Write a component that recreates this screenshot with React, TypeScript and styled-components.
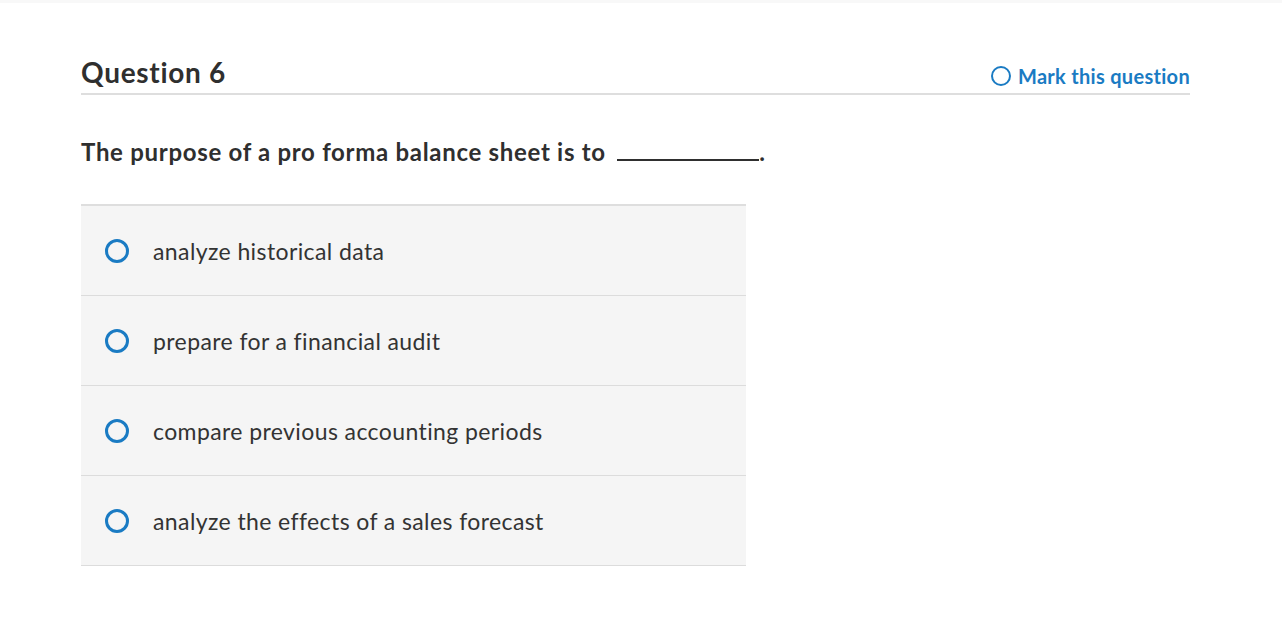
import { createGlobalStyle, styled } from "styled-components";

const GlobalStyle = createGlobalStyle`
  html, body {
    margin: 0;
    padding: 0;
    background: #fff;
    font-family: Lato, "Open Sans", Arial, sans-serif;
    color: #2f2f2f;
  }
`;

const options = [
  "analyze historical data",
  "prepare for a financial audit",
  "compare previous accounting periods",
  "analyze the effects of a sales forecast",
];

const App = () => {
  return (
    <>
      <GlobalStyle />
      <TopStrip />
      <Page>
        <Header>
          <Title>Question 6</Title>
          <MarkButton type="button">
            <MarkCircle />
            Mark this question
          </MarkButton>
        </Header>
        <Prompt>
          The purpose of a pro forma balance sheet is to <Blank />.
        </Prompt>
        <OptionList>
          {options.map((label) => (
            <Option key={label}>
              <Radio />
              <OptionText>{label}</OptionText>
            </Option>
          ))}
        </OptionList>
      </Page>
    </>
  );
};

export default App;

const TopStrip = styled.div`
  height: 3px;
  background: #f8f8f8;
`;

const Page = styled.main`
  width: 1109px;
  padding: 53px 0 0 81px;
`;

const Header = styled.header`
  display: flex;
  justify-content: space-between;
  align-items: flex-end;
  padding-bottom: 5px;
  border-bottom: 2px solid #dedede;
`;

const Title = styled.h1`
  margin: 0;
  font-size: 28px;
  line-height: 32px;
  font-weight: 700;
  letter-spacing: 0.7px;
  color: #2f2f2f;
`;

const MarkButton = styled.button`
  display: flex;
  align-items: center;
  gap: 7px;
  border: 0;
  background: none;
  padding: 0 0 2px;
  font-family: inherit;
  font-size: 20px;
  line-height: 20px;
  font-weight: 700;
  letter-spacing: 0.3px;
  color: #1a7bc3;
  cursor: pointer;
`;

const MarkCircle = styled.span`
  width: 16px;
  height: 16px;
  border: 2px solid #1a7bc3;
  border-radius: 50%;
`;

const Prompt = styled.p`
  margin: 43px 0 0;
  font-size: 24px;
  line-height: 28px;
  font-weight: 700;
  letter-spacing: 0.7px;
  color: #2f2f2f;
`;

const Blank = styled.span`
  display: inline-block;
  width: 142px;
  margin-left: 5px;
  border-bottom: 2px solid #2f2f2f;
  vertical-align: baseline;
`;

const OptionList = styled.div`
  margin-top: 38px;
  width: 665px;
  border-top: 2px solid #dedede;
`;

const Option = styled.label`
  display: flex;
  align-items: center;
  gap: 24px;
  height: 89px;
  padding-left: 24px;
  background: #f5f5f5;
  border-bottom: 1px solid #dcdcdc;
  cursor: pointer;
`;

const Radio = styled.span`
  flex: none;
  width: 18px;
  height: 18px;
  border: 3px solid #1a7bc3;
  border-radius: 50%;
`;

const OptionText = styled.span`
  font-size: 23px;
  letter-spacing: 0.4px;
  color: #333;
`;
